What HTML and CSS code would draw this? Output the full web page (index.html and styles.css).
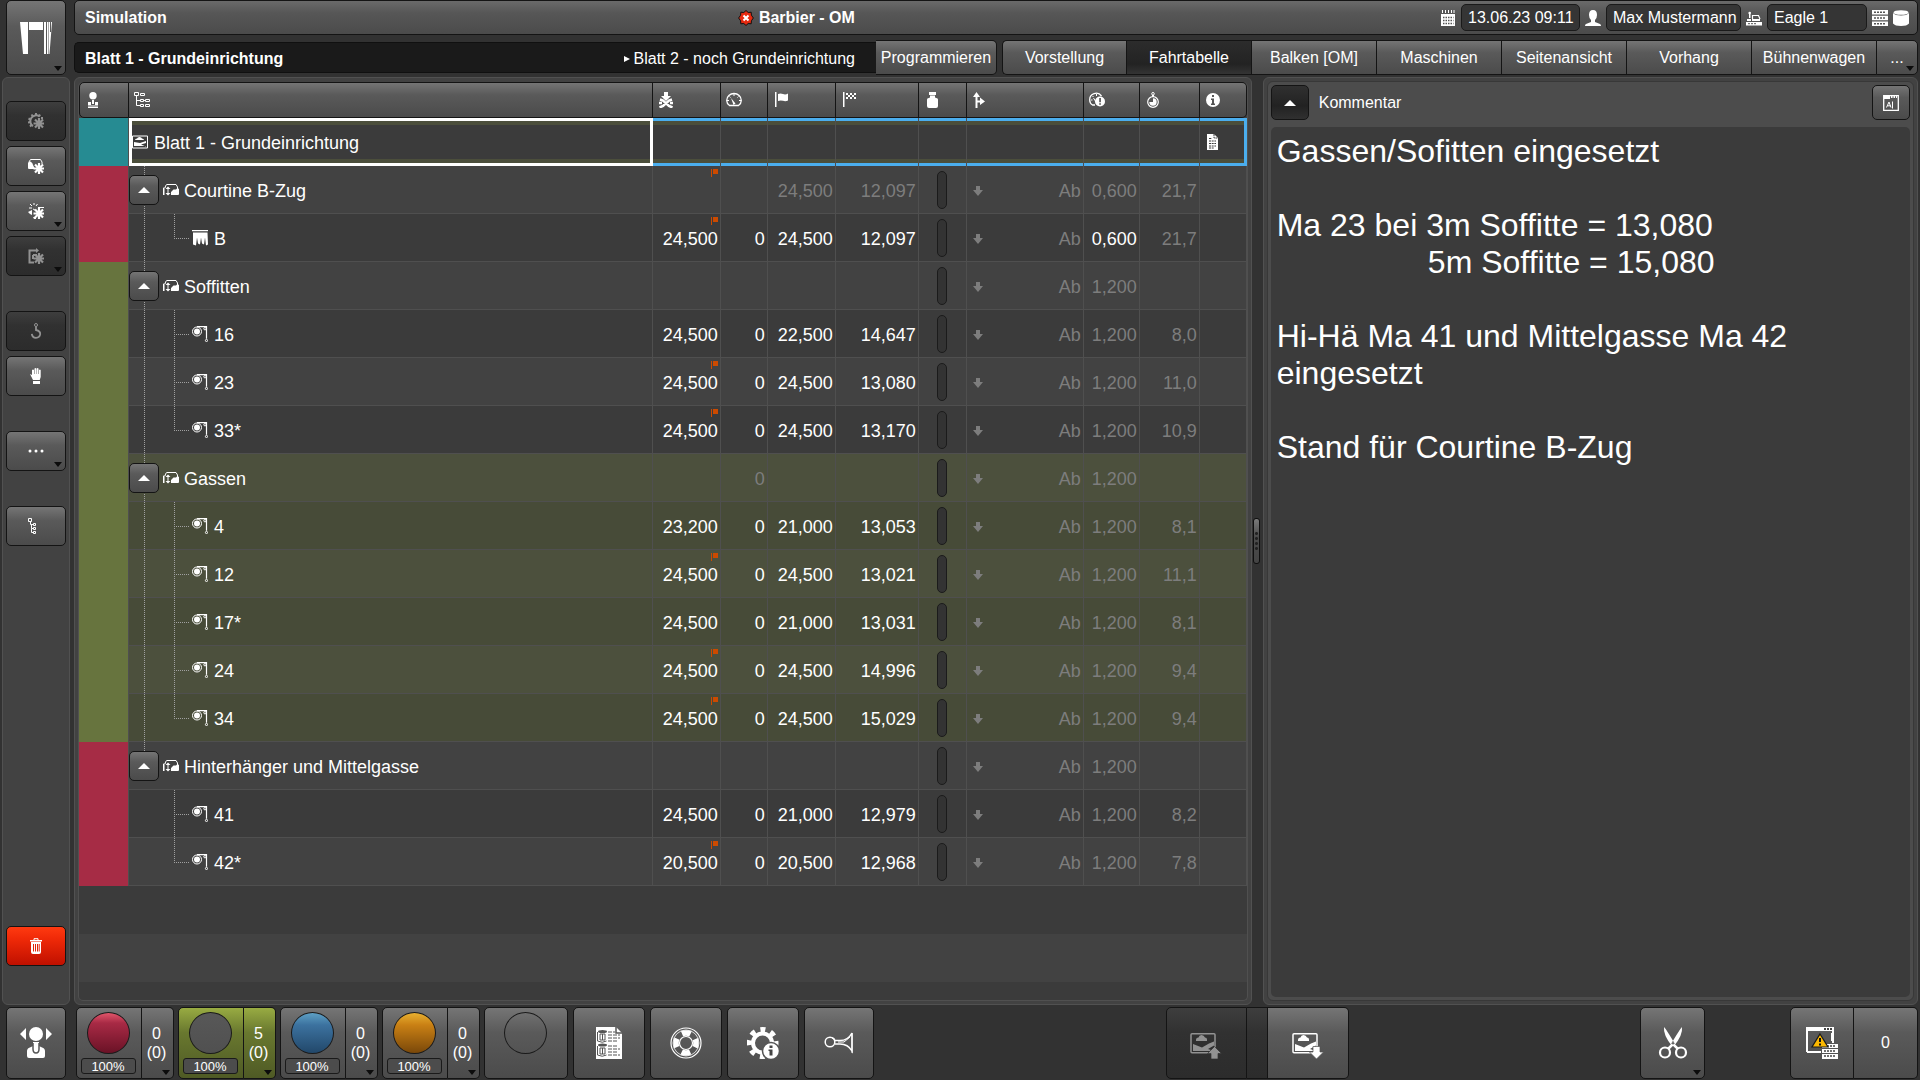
FILE: index.html
```html
<!DOCTYPE html>
<html lang="de">
<head>
  <meta charset="utf-8">
  <title>Fahrtabelle</title>
  <link rel="stylesheet" href="styles.css">
</head>
<body>
  <!-- Icons -->
  <svg class="sprite" aria-hidden="true">
    <symbol id="i-stage" viewBox="0 0 32 32">
      <path d="M0 0h8v32H3zM9 0h14v8H9zM24 0h2v32h-2zM27 0h1.500v32H27z"/>
      <path d="M29 0h1v10h1V0h1l-2.500 32H29z"/>
    </symbol>
    <symbol id="i-star" viewBox="0 0 16 16">
      <path d="M11 5v11M5.500 10.500h11M7 6.500l8 8M15 6.500l-8 8" fill="none" stroke="currentColor" stroke-width="2.200"/>
    </symbol>
    <symbol id="i-gear-new" viewBox="0 0 16 16">
      <path d="M11.500 3.300A5.500 5.500 0 1 0 5 13.200" fill="none" stroke="currentColor" stroke-width="2"/>
      <path d="M8 0v2.500M3.500 1.500l1.500 2M.500 5.500l2 1M0 9.500l2.500-.5M2 13.500l2-2M12 1.500l-1 2M15 5h-2" stroke="currentColor" stroke-width="2"/>
      <use href="#i-star"/>
    </symbol>
    <symbol id="i-group-new" viewBox="0 0 16 16">
      <path d="M1 4l1.500-2.500h10L14 4v2" fill="none" stroke="currentColor"/>
      <path d="M0 5q0-1.500 2.500-1.500Q5 5 5 7l2 4H1q-1 0-1-1z"/>
      <use href="#i-star"/>
    </symbol>
    <symbol id="i-spark-new" viewBox="0 0 16 16">
      <path d="M2 1l2 2M6 0v2M9.500 1L8 3M1 5h3M10 4.500h6M5 6l2 1" stroke="currentColor"/>
      <path d="M0 9l4-2v5l-2-1zM5 14h3v2H6z"/>
      <use href="#i-star"/>
    </symbol>
    <symbol id="i-jump-new" viewBox="0 0 16 16">
      <path d="M9 2.500H1.500v12H6M5 7h4M5 7v4" fill="none" stroke="currentColor" stroke-width="2"/>
      <path d="M8 0l3 2.500L8 5z"/>
      <use href="#i-star"/>
    </symbol>
    <symbol id="i-hook" viewBox="0 0 16 16">
      <circle cx="8" cy="2" r="1.500" fill="none" stroke="currentColor"/>
      <path d="M8 3.500v3.500q4.500 1 4.200 4.200-.6 3.600-4.200 3.600-3.800-.2-4.200-4" fill="none" stroke="currentColor" stroke-width="1.800"/>
    </symbol>
    <symbol id="i-hand" viewBox="0 0 16 16">
      <path d="M2 6l2 1V2q1-1 2 0v4h.5V.5q1-.8 1.800 0V6h.4V.5q1-.8 1.800 0V6h.5V2q1-.8 1.700 0v7l-1 3H5zM5 13h7v3H5z"/>
    </symbol>
    <symbol id="i-dots" viewBox="0 0 16 16">
      <circle cx="2" cy="8" r="1.500"/><circle cx="8" cy="8" r="1.500"/><circle cx="14" cy="8" r="1.500"/>
    </symbol>
    <symbol id="i-chain" viewBox="0 0 16 16">
      <path d="M.5.5h3v3h-3zM5.500 5.500h2v2h-2zM5.500 9.500h2v2h-2zM5.500 13.500h2v2h-2zM2.500 3.500v3h3M3.500 7v3.500h2M3.500 10.500v4h2" fill="none" stroke="currentColor"/>
    </symbol>
    <symbol id="i-trash" viewBox="0 0 16 16">
      <path d="M3 4h10v10q0 2-2 2H5q-2 0-2-2zM2 2h12v1.500H2z"/>
      <path d="M6 2V.7h4V2" fill="none" stroke="currentColor"/>
      <path d="M5.500 6v7.500M7.500 6v7.500M9.500 6v7.500M11.200 6v7.500" stroke="#e02408"/>
    </symbol>
    <symbol id="i-joystick" viewBox="0 0 16 16">
      <circle cx="8" cy="3.700" r="3.700"/>
      <path d="M7 8h2v4H7zM3 10h3v3h4v-3h3v3.500H3zM3 14.500h10V16H3z"/>
    </symbol>
    <symbol id="i-tree" viewBox="0 0 16 16">
      <path d="M.5.5h4v3h-4zM6.500 1.500h4v2h-4zM6.500 7.500h3v2h-3zM11.500 7.500h4v2h-4zM6.500 12.500h3v2h-3zM11.500 12.500h4v2h-4zM2.500 3.500v10h4M2.500 8.500h4M9.500 8.500h2" fill="none" stroke="currentColor"/>
    </symbol>
    <symbol id="i-position" viewBox="0 0 16 16">
      <path d="M6 0h4v4h3L8 9 3 4h3z"/>
      <path d="M2 7.500l3 1 6 5.500 3.500 1.500M14 7.500l-3 1L5 14l-3.500 1.500M1 11h3M12 11h3" fill="none" stroke="currentColor" stroke-width="2.500"/>
    </symbol>
    <symbol id="i-gauge" viewBox="0 0 16 16">
      <path d="M3.500 13.500Q.7 11.500.7 8.500A7.300 7 0 0 1 15.300 8.500q0 3-2.800 5z" fill="none" stroke="currentColor" stroke-width="1.300"/>
      <path d="M3.500 4.500l1 1M8 2v2M12.500 4.500l-1 1M1 8.500h2M15 8.500h-2" stroke="currentColor"/>
      <path d="M5 6l4.500 5.500-2 1.500z"/>
    </symbol>
    <symbol id="i-flag" viewBox="0 0 16 16">
      <path d="M2 0h1.500v15H2zM5 2q2.500-1 5 0t5-.5v7q-2.500 1.200-5 .3T5 9z"/>
    </symbol>
    <symbol id="i-finish" viewBox="0 0 16 16">
      <path d="M2 0h1.500v15H2zM5 1h2v2H5zM9 1h2v2H9zM13 1h2v2h-2zM7 3h2v2H7zM11 3h2v2h-2zM5 5h2v2H5zM9 5h2v2H9zM13 5h2v2h-2z"/>
    </symbol>
    <symbol id="i-weight" viewBox="0 0 16 16">
      <path d="M5 0h7v3H5zM6 3.500h5v2l2.500 1q.5 0 .5 1.500v6q0 2-2 2H5q-2 0-2-2V8q0-1.500.5-1.500L6 5.500z"/>
    </symbol>
    <symbol id="i-route" viewBox="0 0 16 16">
      <path d="M4.500 3v13M5 9.500h5" fill="none" stroke="currentColor" stroke-width="2"/>
      <path d="M4.500 0l3.500 5H1zM8 5.500l5 4-5 3.500z"/>
    </symbol>
    <symbol id="i-gauge-warn" viewBox="0 0 16 16">
      <path d="M6 13H3.500Q.7 11.500.7 8A6.500 6.500 0 0 1 12.500 4" fill="none" stroke="currentColor" stroke-width="1.300"/>
      <path d="M3.500 4l1 1M7.500 2v2M2 8h1.500M4.500 6L7 10" stroke="currentColor"/>
      <circle cx="11" cy="9.500" r="5"/>
      <path d="M10.200 6h1.700v4.200h-1.700zM10.200 11.200h1.700v1.600h-1.700z" fill="#555"/>
    </symbol>
    <symbol id="i-timer" viewBox="0 0 16 16">
      <circle cx="8" cy="10" r="5.300" fill="none" stroke="currentColor" stroke-width="1.200"/>
      <circle cx="8" cy="1.800" r="1.300" fill="none" stroke="currentColor"/>
      <path d="M7 3h2v2H7zM8 10V6.300A3.700 3.700 0 1 1 4.300 10z"/>
    </symbol>
    <symbol id="i-info" viewBox="0 0 16 16">
      <circle cx="8" cy="8" r="7"/>
      <path d="M7 3h2v2H7zM6 6.500h3v5h1V13H6v-1.500h1V8H6z" fill="#555"/>
    </symbol>
    <symbol id="i-sheet" viewBox="0 0 16 16">
      <path d="M.5 2h15v12H.5z" fill="none" stroke="currentColor"/>
      <path d="M3 6q0-1.500 2-1.500Q5.500 3 7.500 3T10 4.500q2 0 2 1.500zM2 8l6 1 6-2v2l-5 1.500 5 2V12H2z"/>
    </symbol>
    <symbol id="i-group" viewBox="0 0 16 16">
      <path d="M2 6q.5-3.500 2-3.500h9L14.500 5v2" fill="none" stroke="currentColor"/>
      <path d="M0 6l1.500-1v8H0zM8 10l2.500-2.500H13L14.500 6l1.500 1v5q0 1-1 1H8zM5 4.500L7.500 7h-2v4h2L5 13.500 2.500 11h2V7h-2z"/>
    </symbol>
    <symbol id="i-curtain" viewBox="0 0 16 16">
      <path d="M0 0h16v1.300H0zM1 2.500h14.500l.5 12-2 1-1-8-1 7-2-1-1-6-1 7-2-1-1-6-1 8-3-1z"/>
    </symbol>
    <symbol id="i-winch" viewBox="0 0 16 16">
      <circle cx="5" cy="5.500" r="4.500" fill="none" stroke="currentColor"/>
      <circle cx="5" cy="5.500" r="3"/>
      <path d="M5 .7h9.500v12" fill="none" stroke="currentColor" stroke-width="1.200"/>
      <circle cx="13" cy="2.700" r="1.200" fill="none" stroke="currentColor"/>
      <circle cx="14.500" cy="14.500" r="1.100" fill="none" stroke="currentColor"/>
    </symbol>
    <symbol id="i-doc" viewBox="0 0 16 16">
      <path d="M3 0h7l4 4v12H3z"/>
      <path d="M10 0v4h4M5 4.500h3M5 7h7M5 9.500h7M5 12h7M5 14h5" fill="none" stroke="#3b3b3b" stroke-dasharray="2 .7"/>
    </symbol>
    <symbol id="i-calendar" viewBox="0 0 16 16">
      <path d="M1 4h14v12H1z"/>
      <path d="M2.500 0v3M5.500 0v3M8.500 0v3M11.500 0v3M14 0v3" stroke="currentColor"/>
      <path d="M3 7.500h10.500M3 10.500h10.500M3 13.500h10.500" stroke="#555" stroke-width="1.500" stroke-dasharray="1.500 1"/>
    </symbol>
    <symbol id="i-user" viewBox="0 0 16 16">
      <path d="M8 0q4 0 4 5 0 3-2 5v2l5 2q1 .5 1 2H0q0-1.500 1-2l5-2v-2Q4 8 4 5q0-5 4-5z"/>
    </symbol>
    <symbol id="i-desk" viewBox="0 0 16 16">
      <path d="M0 12h16v3.500H0zM1 9h4v2H1zM3 4h1.500v4H3zM6 9h8v2H6z"/>
      <circle cx="3.700" cy="3" r="1.300"/>
      <path d="M6.500 9V5.500h6L14 9" fill="none" stroke="currentColor" stroke-width="1.200"/>
      <path d="M2 13.700h9" stroke="#555" stroke-dasharray="2 1"/>
    </symbol>
    <symbol id="i-server" viewBox="0 0 16 16">
      <path d="M0 0h16v4.500H0zM0 5.700h16v4.500H0zM0 11.500h16V16H0z"/>
      <path d="M2 2.300h12M2 8h12M2 13.700h12" stroke="#555" stroke-width="1.500" stroke-dasharray="2 1"/>
    </symbol>
    <symbol id="i-database" viewBox="0 0 16 16">
      <path d="M0 3v10.500Q2 16 8 16t8-2.500V3q-2 2.500-8 2.500T0 3z"/>
      <ellipse cx="8" cy="2.500" rx="7.500" ry="2.300"/>
    </symbol>
    <symbol id="i-badge" viewBox="0 0 16 16">
      <path d="M8 .5l2.200 2 3-.3.200 3 2 2.800-2 2.800-.2 3-3-.3-2.200 2-2.200-2-3 .3-.2-3-2-2.800 2-2.800.2-3 3 .3z" fill="#e62a10" stroke="#111"/>
      <path d="M5.500 5.500l5 5M10.500 5.500l-5 5" stroke="#fff" stroke-width="2"/>
    </symbol>
    <symbol id="i-up" viewBox="0 0 16 16"><path d="M8 5l6 6H2z"/></symbol>
    <symbol id="i-next" viewBox="0 0 8 8"><path d="M1 1l6 3-6 3z"/></symbol>
    <symbol id="i-down-arrow" viewBox="0 0 10 10"><path d="M3 0h4v4h3l-5 6-5-6h3z"/></symbol>
    <symbol id="i-text-window" viewBox="0 0 16 16">
      <path d="M.7.700h14.600v14.600H.7z" fill="none" stroke="currentColor" stroke-width="1.300"/>
      <path d="M1 1h6v3H1zM8 1h1.500v2H8zM10.500 1H12v2h-1.500zM13 1h1v2h-1z"/>
      <path d="M3.500 12.500L6 7l2 5.500M4.500 10.800h3M9.500 6.500v7" fill="none" stroke="currentColor"/>
    </symbol>
    <symbol id="i-joystick-move" viewBox="0 0 32 32">
      <circle cx="16" cy="7" r="7"/>
      <path d="M6 1v12L0 7zM26 1v12l6-6zM11 20l2-1v-4h6v4l2 1q4 1 4 4v5q0 2-2 2H9q-2 0-2-2v-5q0-3 4-4z"/>
      <path d="M13 16v6q0 4 3 4t3-4v-6" fill="none" stroke="#555" stroke-width="1.500"/>
    </symbol>
    <symbol id="i-report" viewBox="0 0 32 32">
      <path d="M3 0h20l6 6v26H3z"/>
      <path d="M23 0v6h6" fill="none" stroke="#555" stroke-width="1.500"/>
      <path d="M15 5h7M15 8h12M15 11h12M15 14h9M15 19h10M15 22h12M15 25h9M15 28h12" stroke="#555" stroke-dasharray="4 1"/>
      <path d="M7 7h5v6H7zM7 21h5v6H7zM9.500 7v6M9.500 21v6M4.500 5v9q5 2.500 9 0M4.500 19v9q5 2.500 9 0" fill="none" stroke="#555"/>
      <ellipse cx="9.500" cy="4.500" rx="4.500" ry="1.500" fill="#555"/>
      <ellipse cx="9.500" cy="18" rx="4.500" ry="1.500" fill="#555"/>
    </symbol>
    <symbol id="i-lifebuoy" viewBox="0 0 32 32">
      <circle cx="16" cy="16" r="15" fill="none" stroke="currentColor" stroke-width="1.200"/>
      <circle cx="16" cy="16" r="13" fill="none" stroke="currentColor" stroke-width=".8"/>
      <circle cx="16" cy="16" r="6.500" fill="none" stroke="currentColor" stroke-width="1.200"/>
      <circle cx="16" cy="16" r="10" fill="none" stroke="currentColor" stroke-width="5.500" stroke-dasharray="8.700 7" stroke-dashoffset="4.350"/>
    </symbol>
    <symbol id="i-gear-info" viewBox="0 0 32 32">
      <circle cx="15.500" cy="16" r="9.500" fill="none" stroke="currentColor" stroke-width="4"/>
      <circle cx="15.500" cy="16" r="13.500" fill="none" stroke="currentColor" stroke-width="5" stroke-dasharray="5 5.600" stroke-dashoffset="2.500"/>
      <circle cx="24" cy="24" r="8.500" stroke="#555" stroke-width="1.500"/>
      <path d="M22.500 18.500h3V21h-3zM21.500 22.500h4v6h-3V24h-1z" fill="#444"/>
    </symbol>
    <symbol id="i-horn" viewBox="0 0 32 32">
      <circle cx="7" cy="15" r="4.800" fill="none" stroke="currentColor" stroke-width="1.500"/>
      <path d="M12 13.500h5q8 0 12-7.500v18q-4-7-12-7h-5M9 11q2 0 3 2.500" fill="none" stroke="currentColor" stroke-width="1.500"/>
      <path d="M29 6v20M15 15h6l6-5" fill="none" stroke="currentColor"/>
    </symbol>
    <symbol id="i-picture" viewBox="0 0 32 32">
      <rect x="1" y="6.700" width="24" height="19" rx="1" fill="none" stroke="currentColor" stroke-width="1.500"/>
      <path d="M6 13q0-2.500 2.500-2.500Q9 8 11.500 8t3.500 2.500q2 0 2 2v1.500H6zM3 17l9 3.500 7-4 5-2v4l-6 3.500 6 2H3z"/>
    </symbol>
    <symbol id="i-picture-up" viewBox="0 0 32 32">
      <use href="#i-picture"/><path d="M24.500 19.500l7 7H28V32h-7v-5.500h-3.500z" stroke="#303030" stroke-width=".7"/>
    </symbol>
    <symbol id="i-picture-down" viewBox="0 0 32 32">
      <use href="#i-picture"/><path d="M24.500 32l7-7H28v-5.500h-7V25h-3.500z" stroke="#555" stroke-width=".7"/>
    </symbol>
    <symbol id="i-scissors" viewBox="0 0 32 32">
      <path d="M7 0q2 2 11 17l-3 2Q6 8 7 0zM25 0q-2 2-11 17l3 2Q26 8 25 0z"/>
      <circle cx="8" cy="25.500" r="5" fill="none" stroke="currentColor" stroke-width="2.200"/>
      <circle cx="24" cy="25.500" r="5" fill="none" stroke="currentColor" stroke-width="2.200"/>
      <path d="M11 22l5-5 5 5" fill="none" stroke="currentColor" stroke-width="2.500"/>
      <circle cx="16" cy="16.500" r="1" fill="#555"/>
    </symbol>
    <symbol id="i-warn-window" viewBox="0 0 32 32">
      <path d="M1 25V1h26v15M1 25h14" fill="none" stroke="currentColor" stroke-width="2"/>
      <path d="M0 0h28v4H0z"/>
      <path d="M18 2h8" stroke="#444" stroke-width="2" stroke-dasharray="2 1"/>
      <path d="M25.500 6v8" stroke="currentColor"/>
      <path d="M16 17h16v4H16zM16 22h16v4H16zM16 27h16v5H16z"/>
      <path d="M18 19h12M18 24h12M18 29h12" stroke="#444" stroke-width="1.500" stroke-dasharray="2 1"/>
      <path d="M14 7l8 13H6z" fill="#fdb900" stroke="#1a1a1a" stroke-width="1.200"/>
      <path d="M13 11h2v4h-2zM13 16.500h2v2h-2z" fill="#111"/>
    </symbol>
  </svg>

  <header class="header">
    <button class="btn btn-stage has-menu" aria-label="Hauptmenü"><svg class="icon-lg"><use href="#i-stage"/></svg></button>
    <div class="header-main">
      <div class="titlebar">
        <strong>Simulation</strong>
        <h1 class="show-name"><svg class="icon"><use href="#i-badge"/></svg>Barbier - OM</h1>
        <div class="status">
          <svg class="icon"><use href="#i-calendar"/></svg>
          <input class="field field-date" type="text" value="13.06.23 09:11" aria-label="Datum" readonly>
          <svg class="icon"><use href="#i-user"/></svg>
          <input class="field field-user" type="text" value="Max Mustermann" aria-label="Benutzer" readonly>
          <svg class="icon"><use href="#i-desk"/></svg>
          <input class="field field-desk" type="text" value="Eagle 1" aria-label="Pult" readonly>
          <svg class="icon"><use href="#i-server"/></svg>
          <svg class="icon"><use href="#i-database"/></svg>
        </div>
      </div>
      <div class="navbar">
        <div class="cue">
          <strong>Blatt 1 - Grundeinrichtung</strong>
          <span class="cue-next"><svg class="icon-xs"><use href="#i-next"/></svg>Blatt 2 - noch Grundeinrichtung</span>
        </div>
        <button class="btn btn-program">Programmieren</button>
        <nav class="tabs">
          <button class="btn tab">Vorstellung</button>
          <button class="btn tab active">Fahrtabelle</button>
          <button class="btn tab">Balken [OM]</button>
          <button class="btn tab">Maschinen</button>
          <button class="btn tab">Seitenansicht</button>
          <button class="btn tab">Vorhang</button>
          <button class="btn tab">Bühnenwagen</button>
          <button class="btn tab tab-more has-menu">...</button>
        </nav>
      </div>
    </div>
  </header>

  <main class="main">
    <aside class="panel sidebar">
      <div class="tools">
        <button class="btn tool" aria-label="Neu" disabled><svg class="icon"><use href="#i-gear-new"/></svg></button>
        <button class="btn tool" aria-label="Neue Gruppe"><svg class="icon"><use href="#i-group-new"/></svg></button>
        <button class="btn tool has-menu" aria-label="Neuer Effekt"><svg class="icon"><use href="#i-spark-new"/></svg></button>
        <button class="btn tool has-menu" aria-label="Neuer Sprung" disabled><svg class="icon"><use href="#i-jump-new"/></svg></button>
      </div>
      <div class="tools">
        <button class="btn tool" aria-label="Last" disabled><svg class="icon"><use href="#i-hook"/></svg></button>
        <button class="btn tool" aria-label="Hand"><svg class="icon"><use href="#i-hand"/></svg></button>
      </div>
      <div class="tools">
        <button class="btn tool has-menu" aria-label="Mehr"><svg class="icon"><use href="#i-dots"/></svg></button>
      </div>
      <div class="tools">
        <button class="btn tool" aria-label="Struktur"><svg class="icon"><use href="#i-chain"/></svg></button>
      </div>
      <button class="btn tool btn-delete" aria-label="Löschen"><svg class="icon"><use href="#i-trash"/></svg></button>
    </aside>

    <section class="panel table-panel">
      <div class="table-wrap">
        <table class="cues">
          <colgroup>
            <col class="c-color"><col><col class="c-actual"><col class="c-speed"><col class="c-actual"><col class="c-target">
            <col class="c-load"><col class="c-dir"><col class="c-vmax"><col class="c-time"><col class="c-info">
          </colgroup>
          <thead>
            <tr>
              <th><svg class="icon"><use href="#i-joystick"/></svg></th>
              <th><svg class="icon"><use href="#i-tree"/></svg></th>
              <th><svg class="icon"><use href="#i-position"/></svg></th>
              <th><svg class="icon"><use href="#i-gauge"/></svg></th>
              <th><svg class="icon"><use href="#i-flag"/></svg></th>
              <th><svg class="icon"><use href="#i-finish"/></svg></th>
              <th><svg class="icon"><use href="#i-weight"/></svg></th>
              <th><svg class="icon"><use href="#i-route"/></svg></th>
              <th><svg class="icon"><use href="#i-gauge-warn"/></svg></th>
              <th><svg class="icon"><use href="#i-timer"/></svg></th>
              <th><svg class="icon"><use href="#i-info"/></svg></th>
            </tr>
          </thead>
          <tbody id="rows"></tbody>
        </table>
      </div>
    </section>

    <div class="splitter"><span class="grip"></span></div>

    <section class="panel comment-panel">
      <div class="comment">
        <div class="comment-head">
          <button class="btn btn-fold" aria-label="Kommentar einklappen"><svg class="icon"><use href="#i-up"/></svg></button>
          <label for="comment">Kommentar</label>
          <button class="btn btn-edit" aria-label="Textfenster"><svg class="icon"><use href="#i-text-window"/></svg></button>
        </div>
        <textarea id="comment" class="comment-text" spellcheck="false">Gassen/Sofitten eingesetzt

Ma 23 bei 3m Soffitte = 13,080
                 5m Soffitte = 15,080

Hi-Hä Ma 41 und Mittelgasse Ma 42 eingesetzt

Stand für Courtine B-Zug</textarea>
      </div>
    </section>
  </main>

  <footer class="footer">
    <button class="btn btn-joy" aria-label="Fahrhebel"><svg class="icon-lg"><use href="#i-joystick-move"/></svg></button>
    <div class="masters">
      <div class="split">
        <button class="btn master"><span class="ball red"></span><span class="pct">100%</span></button>
        <button class="btn count has-menu">0<br>(0)</button>
      </div>
      <div class="split selected">
        <button class="btn master"><span class="ball"></span><span class="pct">100%</span></button>
        <button class="btn count has-menu">5<br>(0)</button>
      </div>
      <div class="split">
        <button class="btn master"><span class="ball blue"></span><span class="pct">100%</span></button>
        <button class="btn count has-menu">0<br>(0)</button>
      </div>
      <div class="split">
        <button class="btn master"><span class="ball orange"></span><span class="pct">100%</span></button>
        <button class="btn count has-menu">0<br>(0)</button>
      </div>
      <button class="btn master master-free" aria-label="Frei"><span class="ball empty"></span></button>
    </div>
    <div class="actions">
      <button class="btn action" aria-label="Bericht"><svg class="icon-lg"><use href="#i-report"/></svg></button>
      <button class="btn action" aria-label="Hilfe"><svg class="icon-lg"><use href="#i-lifebuoy"/></svg></button>
      <button class="btn action" aria-label="Systeminfo"><svg class="icon-lg"><use href="#i-gear-info"/></svg></button>
      <button class="btn action btn-horn" aria-label="Hupe"><svg class="icon-lg"><use href="#i-horn"/></svg></button>
    </div>
    <div class="split steps">
      <button class="btn step" aria-label="Vorheriges Blatt" disabled><svg class="icon-lg"><use href="#i-picture-up"/></svg></button>
      <button class="btn step-gap" aria-label="Aktuelles Blatt" disabled></button>
      <button class="btn step" aria-label="Nächstes Blatt"><svg class="icon-lg"><use href="#i-picture-down"/></svg></button>
    </div>
    <button class="btn btn-cut has-menu" aria-label="Ausschneiden"><svg class="icon-lg"><use href="#i-scissors"/></svg></button>
    <div class="split alarms">
      <button class="btn alarm" aria-label="Meldungen"><svg class="icon-lg"><use href="#i-warn-window"/></svg></button>
      <button class="btn alarm">0</button>
    </div>
  </footer>

  <script src="script.js"></script>
</body>
</html>
```

FILE: styles.css
```css
* {
  box-sizing: border-box;
}
body {
  margin: 0;
  height: 100vh;
  display: flex;
  flex-direction: column;
  background: #323232;
  color: #fff;
  font-family: "Liberation Sans", Arial, sans-serif;
  font-size: 16px;
  overflow: hidden;
}
.sprite {
  display: none;
}
.icon {
  width: 16px;
  height: 16px;
  flex: none;
  fill: currentColor;
}
.icon-lg {
  width: 32px;
  height: 32px;
  flex: none;
  fill: currentColor;
}
.icon-xs {
  width: 8px;
  height: 8px;
  fill: currentColor;
}

/* Buttons */
.btn {
  position: relative;
  display: flex;
  align-items: center;
  justify-content: center;
  margin: 0;
  padding: 0;
  border: 1px solid #141414;
  border-radius: 5px;
  background: linear-gradient(#757575, #5a5a5a 35%, #4b4b4b);
  color: #fff;
  font: inherit;
}
.btn:disabled {
  background: linear-gradient(#3e3e3e, #313131 35%, #2c2c2c);
  color: #929292;
}
.has-menu::after {
  content: '';
  position: absolute;
  right: 3px;
  bottom: 3px;
  border: 4px solid transparent;
  border-top: 5px solid #0c0c0c;
  border-bottom: 0;
}

/* Header */
.header {
  display: flex;
  gap: 8px;
  height: 76px;
  padding: 0 2px 0 6px;
}
.btn-stage {
  width: 60px;
  height: 75px;
}
.header-main {
  flex: 1;
  display: flex;
  flex-direction: column;
  gap: 5px;
}
.titlebar {
  display: flex;
  align-items: center;
  justify-content: space-between;
  height: 35px;
  padding: 0 8px 0 10px;
  border: 1px solid #141414;
  border-radius: 5px;
  background: linear-gradient(#6a6a6a, #575757 35%, #4b4b4b);
}
.show-name {
  display: flex;
  align-items: center;
  gap: 5px;
  margin: 0 14px 0 0;
  font-size: 16px;
}
.status {
  display: flex;
  align-items: center;
  gap: 5px;
}
.field {
  height: 27px;
  padding: 0 2px 0 6px;
  border: 1px solid #1a1a1a;
  border-radius: 5px;
  background: #353535;
  color: #fff;
  font: inherit;
}
.field-date {
  width: 119px;
}
.field-user {
  width: 135px;
}
.field-desk {
  width: 100px;
}
.navbar {
  display: flex;
  height: 35px;
}
.cue {
  flex: 1;
  display: flex;
  align-items: center;
  justify-content: space-between;
  height: 31px;
  margin-top: 2px;
  padding: 3px 21px 0 10px;
  border: 1px solid #101010;
  border-right: 0;
  border-radius: 5px 0 0 5px;
  background: #1a1a1a;
}
.cue-next {
  display: flex;
  align-items: center;
  gap: 3px;
}
.btn-program {
  width: 121px;
  margin-right: 5px;
  border-left: 0;
  border-radius: 0 5px 5px 0;
}
.tabs {
  display: flex;
}
.tab {
  width: 125px;
  border-right-width: 0;
  border-radius: 0;
}
.tab:first-child {
  width: 124px;
  border-radius: 5px 0 0 5px;
}
.tab-more {
  width: 42px;
  border-right-width: 1px;
  border-radius: 0 5px 5px 0;
}
.tab.active {
  background: linear-gradient(#2c2c2c, #232323 70%, #343434);
}

/* Panels */
.main {
  flex: 1;
  display: flex;
  min-height: 0;
  padding: 1px 2px 0;
}
.panel {
  border: 1px solid #515151;
  border-radius: 6px;
  background: #424242;
}
.sidebar {
  display: flex;
  flex-direction: column;
  gap: 35px;
  width: 68px;
  margin-right: 4px;
  padding: 23px 3px 38px;
}
.tools {
  display: flex;
  flex-direction: column;
  gap: 5px;
}
.tool {
  width: 60px;
  height: 40px;
}
.btn-delete {
  margin-top: auto;
  background: linear-gradient(#ff3a10, #f02a08 30%, #c01000);
}
.table-panel {
  flex: 1180 1 0;
  display: flex;
  padding: 4px 3px 3px;
}
.table-wrap {
  flex: 1;
  border: 1px solid #505050;
  border-top: 0;
  border-radius: 5px;
  background: linear-gradient(#3b3b3b 50%, #424242 50%) 0 36px / 100% 96px;
  overflow: hidden;
}
.splitter {
  display: flex;
  align-items: center;
  justify-content: center;
  width: 11px;
  padding-right: 1px;
}
.grip {
  display: flex;
  align-items: center;
  justify-content: center;
  width: 7px;
  height: 46px;
  border: 1px solid #0f0f0f;
  border-radius: 3px;
  background: linear-gradient(#7a7a7a, #4c4c4c 40%, #444);
}
.grip::before {
  content: '';
  width: 3px;
  height: 20px;
  background: radial-gradient(circle, #222 1px, transparent 2px) 0 0 / 3px 5px;
}

/* Cue table */
.cues {
  width: 100%;
  table-layout: fixed;
  border-collapse: separate;
  border-spacing: 0;
  font-size: 18px;
}
.c-color {
  width: 50px;
}
.c-actual {
  width: 68px;
}
.c-speed,
.c-info {
  width: 47px;
}
.c-target {
  width: 83px;
}
.c-load {
  width: 48px;
}
.c-dir {
  width: 117px;
}
.c-vmax {
  width: 56px;
}
.c-time {
  width: 60px;
}
.cues th {
  height: 36px;
  padding: 0 0 0 5px;
  border: solid #141414;
  border-width: 1px 1px 1px 0;
  background: linear-gradient(#757575, #5a5a5a 35%, #4b4b4b);
  text-align: left;
}
.cues th:first-child {
  border-left-width: 1px;
  border-radius: 5px 0 0 5px;
}
.cues th:last-child {
  border-radius: 0 5px 5px 0;
}
.cues th .icon {
  display: block;
}
.cues td {
  position: relative;
  height: 48px;
  padding: 3px 2px 0 0;
  border: solid #4f4f4f;
  border-width: 0 1px 1px 0;
  text-align: right;
}
.cues td.name-cell,
.cues td.load-cell,
.cues .current td {
  padding: 0;
}
.cues tr.marked td {
  background: rgba(106, 122, 46, 0.25);
}
.cues td.dim {
  color: #7d7d7d;
}
.cues td.teal,
.cues tr.marked td.teal {
  background: #268b92;
}
.cues td.red,
.cues tr.marked td.red {
  background: #a62c45;
}
.cues td.green,
.cues tr.marked td.green {
  background: #67743e;
}
.cues td.color-cell {
  border-bottom: 0;
}
.cues .current td {
  border-bottom: 0;
  box-shadow: inset 0 3px #4baeee, inset 0 -3px #4baeee, inset 0 7px #4b4e3b, inset 0 -7px #4b4e3b;
}
.cues .current td.color-cell {
  box-shadow: none;
}
.cues .current td.name-cell {
  border-right: 0;
  box-shadow: inset 0 0 0 3px #fff, inset 0 7px #4b4e3b, inset 0 -7px #4b4e3b;
}
.cues .current td:last-child {
  border-right: 0;
  box-shadow: inset -3px 0 #4baeee, inset 0 3px #4baeee, inset 0 -3px #4baeee, inset 0 7px #4b4e3b, inset 0 -7px #4b4e3b;
}
.name {
  display: flex;
  align-items: center;
  height: 47px;
  text-align: left;
}
.name-root {
  gap: 6px;
  padding-left: 3px;
}
.name .icon {
  margin-right: 5px;
}
.name .icon.winch {
  margin-right: 6px;
}
.name-root .icon {
  margin-right: 0;
}
.label {
  padding-top: 3px;
}
.node,
.trunk {
  display: flex;
  align-items: center;
  width: 30px;
  height: 48px;
  margin-right: 4px;
  background: repeating-linear-gradient(#a0a0a0 0 1px, transparent 1px 2px) 15px 0 / 1px 100% no-repeat;
}
.node.end {
  background-size: 1px 50%;
}
.trunk {
  margin-right: 15px;
}
.trunk.none {
  background: none;
}
.branch {
  width: 15px;
  height: 48px;
  margin-right: 3px;
  background:
    repeating-linear-gradient(#a0a0a0 0 1px, transparent 1px 2px) 0 0 / 1px 100% no-repeat,
    repeating-linear-gradient(90deg, #a0a0a0 0 1px, transparent 1px 2px) 0 24px / 100% 1px no-repeat;
}
.branch.end {
  background-size: 1px 50%, 100% 1px;
}
.btn-toggle {
  width: 30px;
  height: 30px;
}
.name .btn-toggle .icon {
  margin: 0;
}
.flag {
  position: absolute;
  top: 3px;
  right: 2px;
  width: 7px;
  height: 8px;
  background:
    linear-gradient(#cc4a00, #cc4a00) 0 0 / 1px 8px no-repeat,
    linear-gradient(#cc4a00, #cc4a00) 2px 0 / 5px 5px no-repeat;
}
.pill {
  display: block;
  width: 10px;
  height: 38px;
  margin: 0 auto;
  border: 1px solid #1b1b1b;
  border-radius: 5px;
  background: #333;
}
.dir {
  display: flex;
  align-items: center;
  justify-content: space-between;
  padding-left: 6px;
}
.dir svg {
  width: 10px;
  height: 10px;
  fill: currentColor;
}
.info-icon {
  display: block;
  margin-left: 4px;
}

/* Comment */
.comment-panel {
  flex: 653 1 0;
  display: flex;
  padding: 3px;
}
.comment {
  flex: 1;
  display: flex;
  flex-direction: column;
  padding: 3px;
  border: 1px solid #383838;
  border-radius: 6px;
  background: #4c4c4c;
}
.comment-head {
  display: flex;
  align-items: center;
  gap: 10px;
  height: 35px;
  margin-bottom: 7px;
}
.btn-fold,
.btn-edit {
  width: 38px;
  height: 35px;
}
.btn-fold {
  background: linear-gradient(#303030, #222 60%, #303030);
}
.btn-edit {
  margin-left: auto;
}
.comment-text {
  flex: 1;
  display: block;
  width: 100%;
  padding: 6px;
  border: 0;
  border-radius: 5px;
  outline: 0;
  resize: none;
  background: #3b3b3b;
  color: #fff;
  font-family: inherit;
  font-size: 32px;
  line-height: 37px;
}

/* Footer */
.footer {
  display: flex;
  height: 75px;
  padding: 2px 2px 1px 6px;
}
.btn-joy {
  width: 60px;
  margin-right: 10px;
}
.masters {
  display: flex;
  gap: 4px;
  margin-right: 5px;
}
.split {
  display: flex;
}
.split .btn {
  border-radius: 0;
}
.split .btn + .btn {
  border-left: 0;
}
.split .btn:first-child {
  border-radius: 5px 0 0 5px;
}
.split .btn:last-child {
  border-radius: 0 5px 5px 0;
}
.master {
  flex-direction: column;
  justify-content: flex-start;
  gap: 4px;
  width: 66px;
  padding-top: 4px;
  padding-right: 2px;
}
.master-free {
  width: 84px;
}
.ball {
  width: 43px;
  height: 42px;
  border: 1px solid #1a1a1a;
  border-radius: 50%;
  background: linear-gradient(#585858, #505050);
}
.ball.empty {
  background: none;
}
.ball.red {
  background: linear-gradient(#e0566a, #a82a45 25%, #6a1226);
}
.ball.blue {
  background: linear-gradient(#5ea0c4, #3c729f 30%, #22486a);
}
.ball.orange {
  background: linear-gradient(#e8b030, #c98014 30%, #7a480a);
}
.pct {
  width: 55px;
  height: 16px;
  border: 1px solid #1a1a1a;
  border-radius: 3px;
  background: #4c4c4c;
  font-size: 13px;
  line-height: 15px;
}
.count {
  width: 32px;
  padding-right: 2px;
  line-height: 19px;
}
.selected .btn {
  background: linear-gradient(#98ab42, #69782f 35%, #4f5a25);
}
.actions {
  display: flex;
  gap: 5px;
}
.action {
  width: 72px;
}
.btn-horn {
  width: 70px;
}
.steps {
  margin-left: auto;
}
.step {
  width: 81px;
}
.step-gap {
  width: 21px;
}
.btn-cut {
  width: 65px;
  margin-left: auto;
}
.alarms {
  margin-left: 85px;
}
.alarm {
  width: 64px;
}
```

FILE: script.js
```js
// Zeilen der Fahrtabelle
const rows = [
  { type: 'root', color: 'teal', name: 'Blatt 1 - Grundeinrichtung' },
  { type: 'group', color: 'red', name: 'Courtine B-Zug', flag: true, from: '24,500', to: '12,097', vmax: '0,600', time: '21,7' },
  { color: 'red', icon: 'curtain', name: 'B', flag: true, actual: '24,500', from: '24,500', to: '12,097', vmax: '0,600', own: true, time: '21,7', end: true },
  { type: 'group', color: 'green', name: 'Soffitten', vmax: '1,200' },
  { color: 'green', name: '16', actual: '24,500', from: '22,500', to: '14,647', vmax: '1,200', time: '8,0' },
  { color: 'green', name: '23', flag: true, actual: '24,500', from: '24,500', to: '13,080', vmax: '1,200', time: '11,0' },
  { color: 'green', name: '33*', flag: true, actual: '24,500', from: '24,500', to: '13,170', vmax: '1,200', time: '10,9', end: true },
  { type: 'group', color: 'green', marked: true, name: 'Gassen', speed: '0', vmax: '1,200' },
  { color: 'green', marked: true, name: '4', actual: '23,200', from: '21,000', to: '13,053', vmax: '1,200', time: '8,1' },
  { color: 'green', marked: true, name: '12', flag: true, actual: '24,500', from: '24,500', to: '13,021', vmax: '1,200', time: '11,1' },
  { color: 'green', marked: true, name: '17*', actual: '24,500', from: '21,000', to: '13,031', vmax: '1,200', time: '8,1' },
  { color: 'green', marked: true, name: '24', flag: true, actual: '24,500', from: '24,500', to: '14,996', vmax: '1,200', time: '9,4' },
  { color: 'green', marked: true, name: '34', flag: true, actual: '24,500', from: '24,500', to: '15,029', vmax: '1,200', time: '9,4', end: true },
  { type: 'group', color: 'red', name: 'Hinterhänger und Mittelgasse', vmax: '1,200', lastGroup: true },
  { color: 'red', name: '41', actual: '24,500', from: '21,000', to: '12,979', vmax: '1,200', time: '8,2', lastGroup: true },
  { color: 'red', name: '42*', flag: true, actual: '20,500', from: '20,500', to: '12,968', vmax: '1,200', time: '7,8', lastGroup: true, end: true }
];

function icon(id, cls = 'icon') {
  return `<svg class="${cls}"><use href="#i-${id}"/></svg>`;
}

function nameCell(row) {
  const label = `<span class="label">${row.name}</span>`;
  if (row.type === 'root') {
    return `<div class="name name-root">${icon('sheet')}${label}</div>`;
  }
  if (row.type === 'group') {
    return `<div class="name"><span class="node ${row.lastGroup ? 'end' : ''}">
      <button class="btn btn-toggle" aria-label="Einklappen">${icon('up')}</button></span>${icon('group')}${label}</div>`;
  }
  return `<div class="name"><span class="trunk ${row.lastGroup ? 'none' : ''}"></span><span class="branch ${row.end ? 'end' : ''}"></span>
    ${icon(row.icon || 'winch', 'icon winch')}${label}</div>`;
}

function renderRow(row) {
  const color = `<td class="color-cell ${row.color}"></td>`;
  if (row.type === 'root') {
    return `<tr class="current">${color}<td class="name-cell">${nameCell(row)}</td>${'<td></td>'.repeat(8)}<td>${icon('doc', 'icon info-icon')}</td></tr>`;
  }
  const isGroup = row.type === 'group';
  const dim = isGroup ? 'dim' : '';
  const speed = row.speed || (isGroup ? '' : '0');
  return `<tr class="${row.marked ? 'marked' : ''}">
    ${color}
    <td class="name-cell">${nameCell(row)}</td>
    <td>${row.flag ? '<span class="flag"></span>' : ''}${row.actual || ''}</td>
    <td class="${dim}">${speed}</td>
    <td class="${dim}">${row.from || ''}</td>
    <td class="${dim}">${row.to || ''}</td>
    <td class="load-cell"><span class="pill"></span></td>
    <td class="dim"><div class="dir">${icon('down-arrow', 'arrow')}Ab</div></td>
    <td class="${row.own ? '' : 'dim'}">${row.vmax}</td>
    <td class="dim">${row.time || ''}</td>
    <td></td>
  </tr>`;
}

document.getElementById('rows').innerHTML = rows.map(renderRow).join('');
```
